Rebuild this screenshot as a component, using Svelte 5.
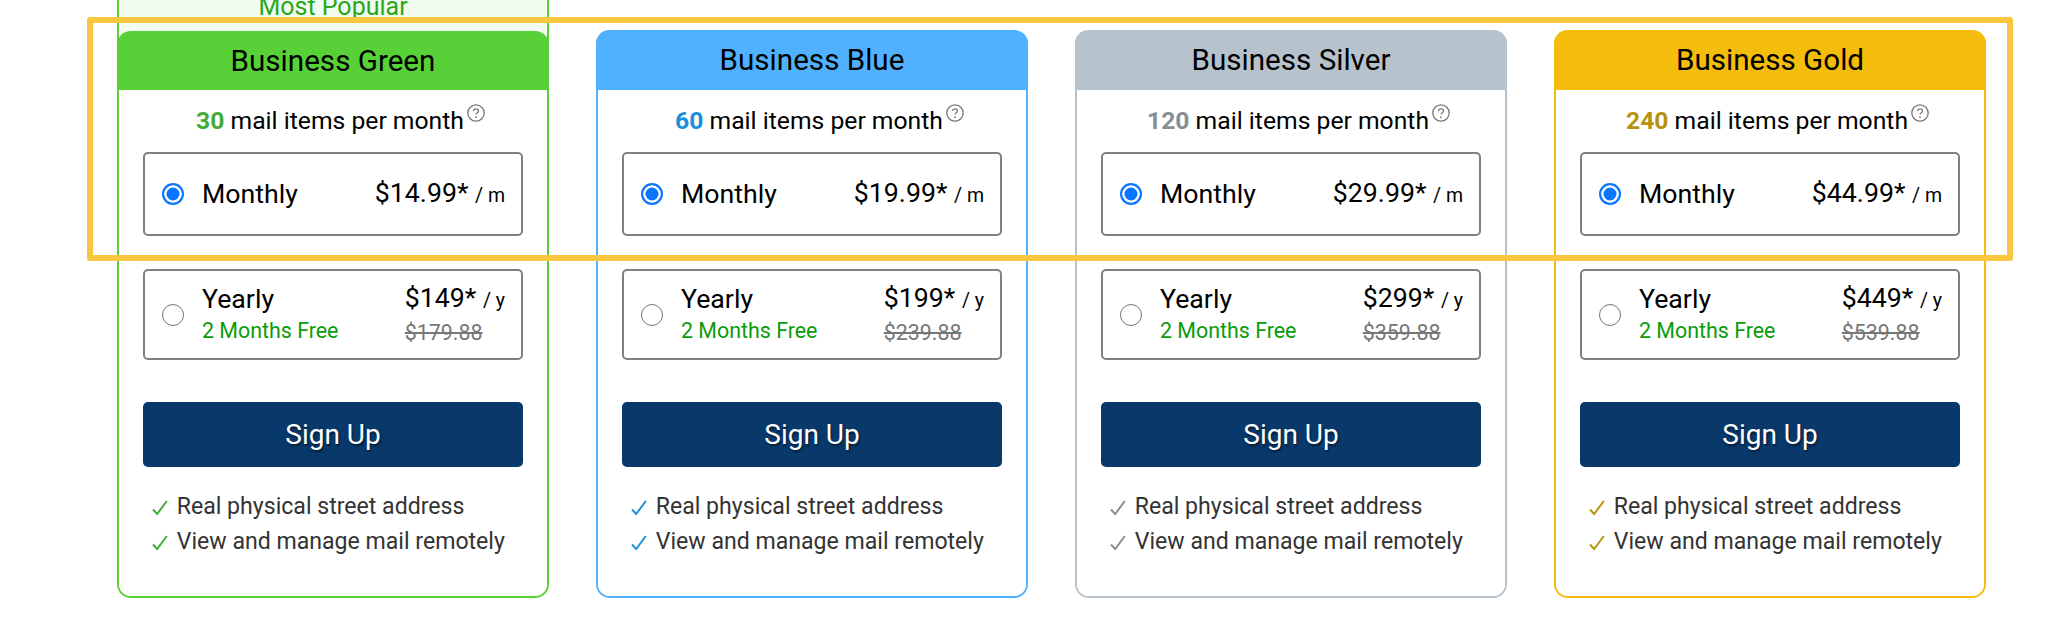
<script>
  const plans = [
    { name: 'Business Green', cls: 'green', items: 30, monthly: '14.99', yearly: '149', was: '179.88', popular: true },
    { name: 'Business Blue', cls: 'blue', items: 60, monthly: '19.99', yearly: '199', was: '239.88' },
    { name: 'Business Silver', cls: 'silver', items: 120, monthly: '29.99', yearly: '299', was: '359.88' },
    { name: 'Business Gold', cls: 'gold', items: 240, monthly: '44.99', yearly: '449', was: '539.88' }
  ];
  const features = ['Real physical street address', 'View and manage mail remotely'];
</script>

<div class="page">
  <div class="plans">
    {#each plans as plan}
      <section class="plan {plan.cls}" class:popular={plan.popular}>
        {#if plan.popular}
          <div class="tag"><span>Most Popular</span></div>
        {/if}
        <h2>{plan.name}</h2>
        <div class="body">
          <p class="items">
            <b>{plan.items}</b> mail items per month<svg class="help" viewBox="0 0 18 18" width="18" height="18" aria-hidden="true">
              <circle cx="9" cy="9" r="8.2" fill="none" stroke="#777" stroke-width="1.3"/>
              <path d="M6.5 7.1c0-1.4 1.1-2.3 2.5-2.3s2.5.8 2.5 2.1c0 1.8-2.5 1.8-2.5 3.7" fill="none" stroke="#777" stroke-width="1.3"/>
              <circle cx="9" cy="13.2" r=".9" fill="#777"/>
            </svg>
          </p>
          <div class="option monthly">
            <span class="radio on"></span>
            <span class="label">Monthly</span>
            <span class="price">${plan.monthly}* <small>/ m</small></span>
          </div>
          <div class="option yearly">
            <span class="radio"></span>
            <div class="stack">
              <span class="label">Yearly</span>
              <span class="free">2 Months Free</span>
            </div>
            <div class="stack right">
              <span class="price">${plan.yearly}* <small>/ y</small></span>
              <s>${plan.was}</s>
            </div>
          </div>
          <button>Sign Up</button>
          <ul>
            {#each features as f}
              <li>
                <svg class="check" viewBox="0 0 16 16" width="16" height="16" aria-hidden="true">
                  <path d="M1 9.5l4.2 4.5L14.8 1" fill="none" stroke="currentColor" stroke-width="2"/>
                </svg>
                {f}
              </li>
            {/each}
          </ul>
        </div>
      </section>
    {/each}
  </div>
  <div class="highlight"></div>
</div>

<style>
  :global(body) { background: #fff; }
  .page { position: relative; height: 618px; overflow: hidden; font-family: Roboto, "Liberation Sans", sans-serif; color: #000; }
  .plans { display: flex; align-items: flex-end; gap: 47px; padding-left: 117px; height: 598px; }
  .plan { width: 432px; box-sizing: border-box; border: 2px solid var(--c); border-radius: 14px; border-top: 0; }
  .plan.popular { background: #f1fbf0; border-radius: 0 0 14px 14px; }
  .plan.green { --c: #58d138; --n: #44ab38; }
  .plan.blue { --c: #50b2ff; --n: #1a8fdc; }
  .plan.silver { --c: #b6c2cc; --n: #868e96; }
  .plan.gold { --c: #f5bd0b; --n: #b8920f; }
  .tag { height: 32px; display: flex; justify-content: center; color: #2aa61a; font-size: 25px; line-height: 28px; overflow: hidden; }
  .tag span { position: relative; top: -6px; }
  h2 { margin: 0 -2px; height: 60px; background: var(--c); border-radius: 14px 14px 0 0; font-size: 29.6px; font-weight: 400; line-height: 60px; text-align: center; }
  .popular h2 { height: 59px; }
  .body { padding: 0 24px 37px 24px; background: #fff; border-radius: 0 0 12px 12px; }
  .items { margin: 0; height: 62px; padding-top: 14px; box-sizing: border-box; text-align: center; font-size: 24.7px; line-height: 28px; white-space: nowrap; }
  .items b { color: var(--n); font-weight: 700; }
  .help { margin-left: 3px; margin-right: -15px; vertical-align: 7px; }
  .option { display: flex; align-items: center; box-sizing: border-box; border: 2px solid #808080; border-radius: 5px; padding: 0 16px 0 17px; }
  .monthly { height: 84px; margin-bottom: 33px; }
  .yearly { height: 91px; margin-bottom: 42px; }
  .radio { width: 22px; height: 22px; box-sizing: border-box; border: 1.5px solid #777; border-radius: 50%; margin-right: 18px; flex: none; }
  .radio.on { border: 2px solid #0a75ff; background: #0a75ff; box-shadow: inset 0 0 0 2.5px #fff; }
  .label { font-size: 26.7px; line-height: 32px; }
  .monthly .price { margin-left: auto; }
  .price { font-size: 26.7px; line-height: 32px; }
  small { font-size: 19.5px; }
  .stack { display: flex; flex-direction: column; }
  .stack.right { margin-left: auto; align-items: flex-start; }
  .free { color: #0a9c0a; font-size: 21.4px; line-height: 31px; }
  s { color: #777; font-size: 21.4px; line-height: 31px; }
  button { display: block; width: 100%; height: 65px; border: 0; border-radius: 5px; background: #08396a; color: #fff; font: 28px Roboto, sans-serif; text-shadow: 1px 2px 2px rgba(0,0,0,.5); }
  ul { list-style: none; margin: 22px 0 0; padding: 0 0 0 9px; color: #333; font-size: 23.1px; line-height: 35px; }
  .check { color: var(--n); margin-right: 3px; vertical-align: -2px; }
  .highlight { position: absolute; left: 87px; top: 17px; width: 1926px; height: 244px; box-sizing: border-box; border: 6px solid #f9c73f; border-radius: 3px; }
</style>
